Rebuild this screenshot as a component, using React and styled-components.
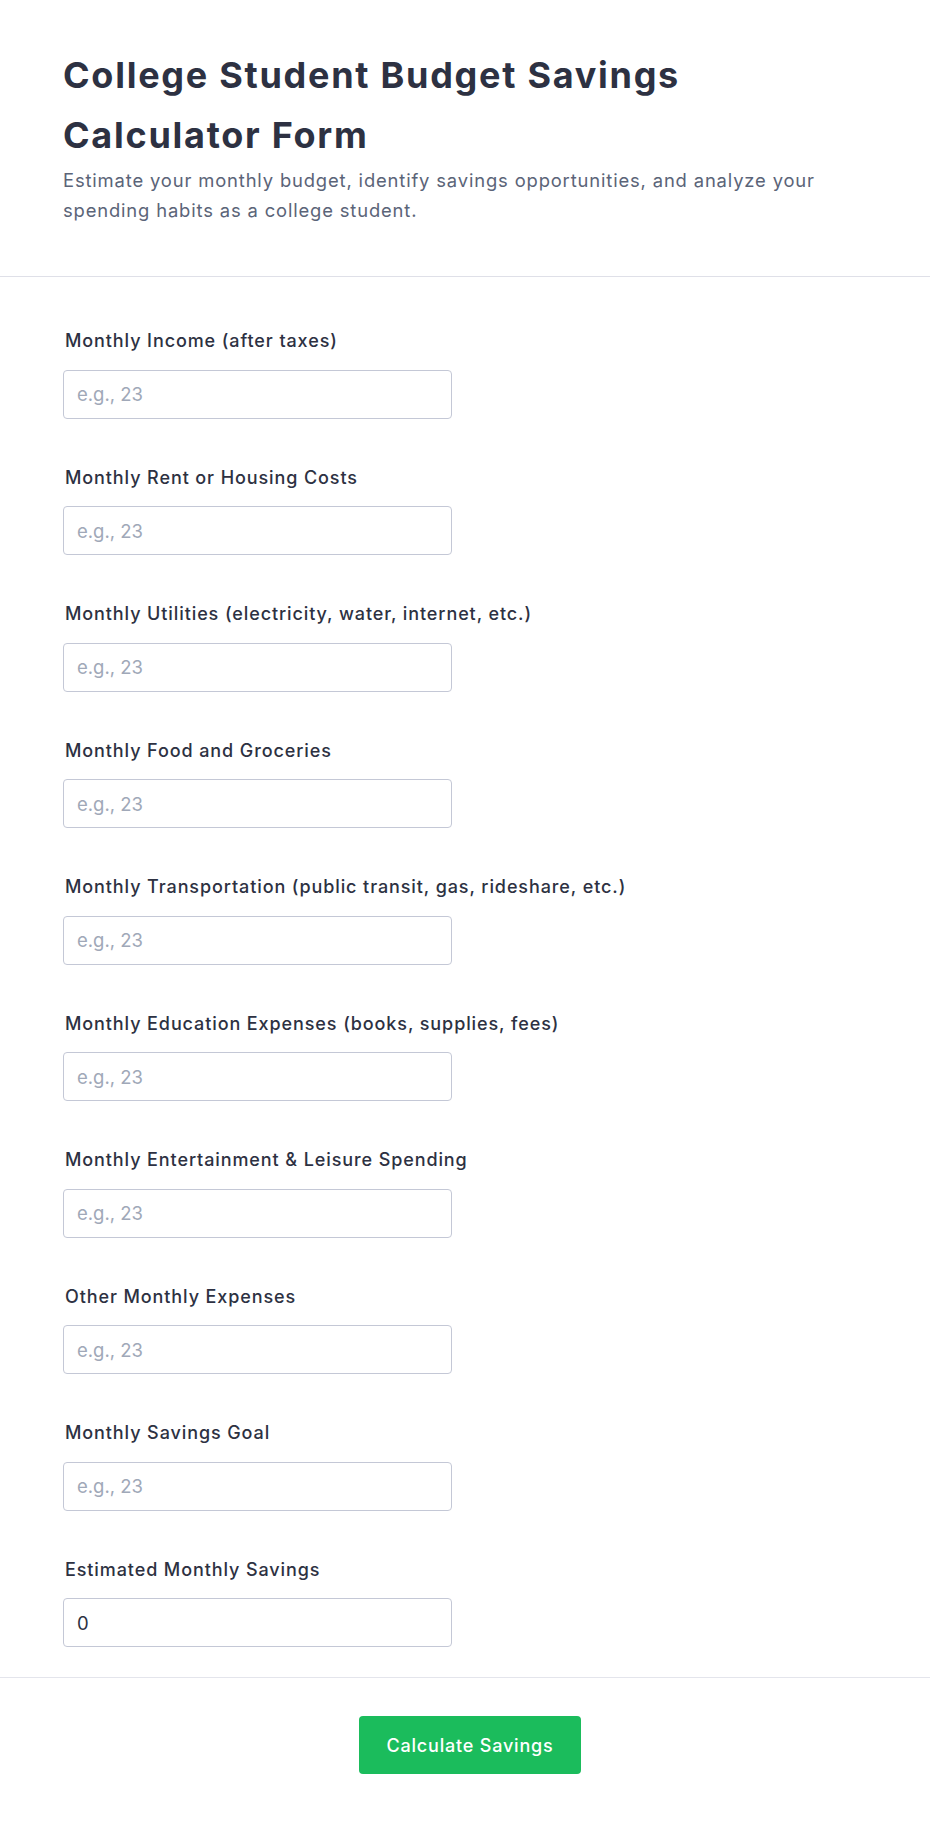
import styled, { createGlobalStyle } from 'styled-components';

const GlobalStyle = createGlobalStyle`
    * {
        box-sizing: border-box;
    }
    body {
        margin: 0;
        background: #ffffff;
        font-family: Inter, 'Noto Sans', sans-serif;
        color: #2d3142;
    }
`;

const fields = [
    { label: 'Monthly Income (after taxes)', name: 'income' },
    { label: 'Monthly Rent or Housing Costs', name: 'rent' },
    { label: 'Monthly Utilities (electricity, water, internet, etc.)', name: 'utilities' },
    { label: 'Monthly Food and Groceries', name: 'food' },
    { label: 'Monthly Transportation (public transit, gas, rideshare, etc.)', name: 'transport' },
    { label: 'Monthly Education Expenses (books, supplies, fees)', name: 'education' },
    { label: 'Monthly Entertainment & Leisure Spending', name: 'entertainment' },
    { label: 'Other Monthly Expenses', name: 'other' },
    { label: 'Monthly Savings Goal', name: 'goal' },
];

export default function App() {
    return (
        <>
            <GlobalStyle />
            <Form onSubmit={e => e.preventDefault()}>
                <Header>
                    <Title>College Student Budget Savings Calculator Form</Title>
                    <Subtitle>
                        Estimate your monthly budget, identify savings opportunities, and
                        analyze your spending habits as a college student.
                    </Subtitle>
                </Header>
                <Fields>
                    {fields.map(f => (
                        <Field key={f.name}>
                            <Label htmlFor={f.name}>{f.label}</Label>
                            <Input id={f.name} type="number" placeholder="e.g., 23" />
                        </Field>
                    ))}
                    <Field>
                        <Label htmlFor="estimated">Estimated Monthly Savings</Label>
                        <Input id="estimated" type="text" defaultValue="0" readOnly />
                    </Field>
                </Fields>
                <Footer>
                    <SubmitButton type="submit">Calculate Savings</SubmitButton>
                </Footer>
            </Form>
        </>
    );
}

const Form = styled.form({
    display: 'flex',
    flexDirection: 'column',
    width: '100%',
});

const Header = styled.header({
    padding: '45px 63px 51px',
    borderBottom: '1px solid #dfe0e8',
});

const Title = styled.h1({
    margin: 0,
    fontSize: '36px',
    lineHeight: '60px',
    fontWeight: 700,
    letterSpacing: '0.048em',
    color: '#2d3142',
});

const Subtitle = styled.p({
    margin: 0,
    fontSize: '18.4px',
    lineHeight: '30px',
    letterSpacing: '0.046em',
    color: '#5b6478',
});

const Fields = styled.div({
    display: 'flex',
    flexDirection: 'column',
    gap: '46px',
    padding: '51px 63px 30px',
    borderBottom: '1px solid #e4e5ec',
});

const Field = styled.div({
    display: 'flex',
    flexDirection: 'column',
    gap: '16px',
});

const Label = styled.label({
    paddingLeft: '2px',
    fontSize: '18px',
    lineHeight: '25.5px',
    fontWeight: 500,
    letterSpacing: '0.05em',
    color: '#2d3142',
});

const Input = styled.input({
    width: '389px',
    height: '49px',
    padding: '0 13px',
    border: '1px solid #c4c8d6',
    borderRadius: '4px',
    fontFamily: 'inherit',
    fontSize: '18.5px',
    color: '#2d3142',
    background: '#ffffff',
    outline: 'none',
    MozAppearance: 'textfield',

    '&::placeholder': {
        color: '#a0a8b8',
    },
    '&::-webkit-outer-spin-button, &::-webkit-inner-spin-button': {
        WebkitAppearance: 'none',
        margin: 0,
    },
});

const Footer = styled.div({
    display: 'flex',
    justifyContent: 'center',
    padding: '38px 0 50px 10px',
});

const SubmitButton = styled.button({
    height: '58px',
    padding: '0 27px',
    border: 'none',
    borderRadius: '4px',
    background: '#1bbc5c',
    color: '#ffffff',
    fontFamily: 'inherit',
    fontSize: '18px',
    fontWeight: 500,
    letterSpacing: '0.045em',
    cursor: 'pointer',
});
